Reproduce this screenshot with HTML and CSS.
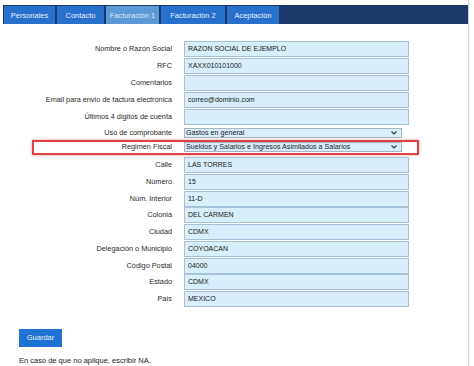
FILE: index.html
```html
<!DOCTYPE html>
<html lang="es">
<head>
<meta charset="utf-8">
<title>Facturación</title>
<link rel="stylesheet" href="styles.css">
</head>
<body>
<div class="frame">
  <nav class="tabs">
    <a class="tab t1">Personales</a>
    <a class="tab t2">Contacto</a>
    <a class="tab t3 active">Facturación 1</a>
    <a class="tab t4">Facturación 2</a>
    <a class="tab t5">Aceptación</a>
  </nav>
  <form class="form">
    <div class="row"><label>Nombre o Razón Social</label><div class="field">RAZON SOCIAL DE EJEMPLO</div></div>
    <div class="row"><label>RFC</label><div class="field">XAXX010101000</div></div>
    <div class="row"><label>Comentarios</label><div class="field"></div></div>
    <div class="row"><label>Email para envio de factura electrónica</label><div class="field">correo@dominio.com</div></div>
    <div class="row"><label>Últimos 4 digitos de cuenta</label><div class="field"></div></div>
    <div class="row sel-row uso"><label>Uso de comprobante</label><div class="select"><span>Gastos en general</span><svg class="chev" width="6" height="4" viewBox="0 0 6 4"><path d="M0.5 0.5 L3 3 L5.5 0.5" fill="none" stroke="#333" stroke-width="1.1"/></svg></div></div>
    <div class="row sel-row regimen"><span class="highlight"></span><label>Regimen Fiscal</label><div class="select"><span>Sueldos y Salarios e Ingresos Asimilados a Salarios</span><svg class="chev" width="6" height="4" viewBox="0 0 6 4"><path d="M0.5 0.5 L3 3 L5.5 0.5" fill="none" stroke="#333" stroke-width="1.1"/></svg></div></div>
    <div class="row low"><label>Calle</label><div class="field">LAS TORRES</div></div>
    <div class="row low"><label>Número</label><div class="field">15</div></div>
    <div class="row low"><label>Núm. Interior</label><div class="field">11-D</div></div>
    <div class="row low"><label>Colonia</label><div class="field">DEL CARMEN</div></div>
    <div class="row low"><label>Ciudad</label><div class="field">CDMX</div></div>
    <div class="row low"><label>Delegación o Municipio</label><div class="field">COYOACAN</div></div>
    <div class="row low"><label>Código Postal</label><div class="field">04000</div></div>
    <div class="row low"><label>Estado</label><div class="field">CDMX</div></div>
    <div class="row low"><label>País</label><div class="field">MEXICO</div></div>
    <div class="actions">
      <button type="button" class="btn">Guardar</button>
      <p class="note">En caso de que no aplique, escribir NA.</p>
    </div>
  </form>
</div>
</body>
</html>
```
FILE: styles.css
```css
html, body {
  margin: 0;
  padding: 0;
  background: #ffffff;
}
body {
  font-family: "Liberation Sans", Arial, sans-serif;
  font-size: 7.3px;
  color: #222;
  width: 474px;
  height: 366px;
  overflow: hidden;
}
.frame {
  width: 469px;
  height: 366px;
  border-right: 1px solid #c6d0da;
  box-sizing: border-box;
  padding-top: 5px;
}
.tabs {
  margin-left: 3px;
  width: 465px;
  height: 19px;
  background: #1f386c;
  display: flex;
  gap: 2px;
  padding: 1px 0 0 1px;
  box-sizing: border-box;
}
.tab {
  height: 18px;
  display: flex;
  align-items: center;
  justify-content: center;
  background: #2770cc;
  color: #eaf2fb;
  font-size: 7.5px;
}
.tab.active {
  background: #5b99d7;
  color: #dce9f6;
}
.t1 { width: 51px; }
.t2 { width: 47px; }
.t3 { width: 53px; }
.t4 { width: 64px; }
.t5 { width: 52px; }

.form {
  padding-top: 17px;
  margin: 0;
}
.row {
  position: relative;
  display: grid;
  grid-template-columns: 172px 225px;
  column-gap: 12px;
  align-items: start;
  height: 17px;
}
.row.low {
  height: 16.75px;
}
.row label {
  text-align: right;
  line-height: 16px;
  color: #2a2a2a;
  white-space: nowrap;
}
.field {
  height: 16px;
  box-sizing: border-box;
  background: #d8eefa;
  border: 1px solid #a4c3da;
  padding-left: 3px;
  line-height: 14px;
  font-size: 7px;
  color: #1a1a1a;
  white-space: nowrap;
}
.sel-row {
  grid-template-columns: 172px 218px;
}
.uso {
  height: 15px;
}
.uso label, .uso .select {
  margin-top: 2px;
}
.regimen {
  height: 16px;
}
.regimen label, .regimen .select {
  margin-top: 1px;
}
.sel-row label {
  line-height: 10px;
}
.select {
  height: 10px;
  box-sizing: border-box;
  background: #d8eefa;
  border: 1px solid #a4b8c8;
  display: flex;
  align-items: center;
  justify-content: space-between;
  padding: 0 4px 0 1px;
  line-height: 8px;
  font-size: 7.15px;
  color: #1a1a1a;
  white-space: nowrap;
}
.chev {
  display: block;
}
.highlight {
  position: absolute;
  left: 32px;
  top: -1px;
  width: 387px;
  height: 15px;
  box-sizing: border-box;
  border: 2px solid #dc4248;
  box-shadow: 0 0 3px rgba(200, 40, 40, 0.45);
  pointer-events: none;
}
.actions {
  padding: 21px 0 0 19px;
}
.btn {
  display: block;
  width: 43px;
  height: 18px;
  border: 0;
  background: #1f72d3;
  color: #e9f2fc;
  font-family: "Liberation Sans", Arial, sans-serif;
  font-size: 7.5px;
  padding: 0;
  margin: 0;
}
.note {
  margin: 9px 0 0 0;
  color: #222;
  font-size: 7.5px;
}
```
